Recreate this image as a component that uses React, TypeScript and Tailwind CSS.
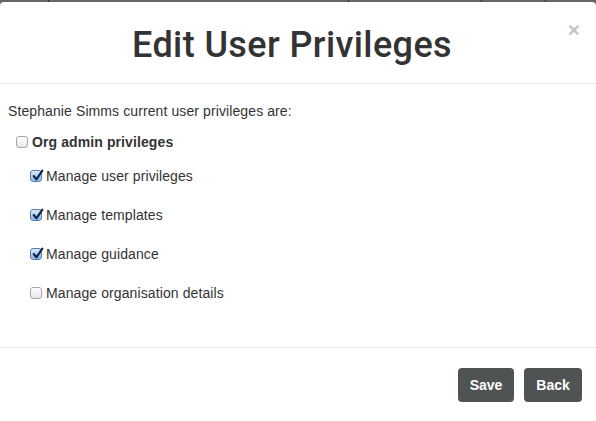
import React from "react"

const Box = ({ checked }: { checked: boolean }) => (
  <span
    className={
      "relative inline-block w-[12px] h-[12px] rounded-[3px] border shrink-0 " +
      (checked
        ? "border-[#5a7fb0] bg-gradient-to-b from-[#d9e8fb] to-[#8fb6ea]"
        : "border-[#a6a6a6] bg-gradient-to-b from-white to-[#e6e6e6]")
    }
  >
    {checked && (
      <svg viewBox="0 0 12 12" className="absolute left-[0px] top-[-2px] w-[13px] h-[13px]">
        <path d="M2.5 6.5 L5 9.5 L10.5 1.5" fill="none" stroke="#0f2748" strokeWidth="2" strokeLinecap="round" strokeLinejoin="round" />
      </svg>
    )}
  </span>
)

const privileges = [
  { label: "Manage user privileges", checked: true },
  { label: "Manage templates", checked: true },
  { label: "Manage guidance", checked: true },
  { label: "Manage organisation details", checked: false },
]

export default function App() {
  return (
    <div className="h-[421px] w-[596px] overflow-hidden bg-[#666] font-['Liberation_Sans',Arial,sans-serif] text-[#333]">
      <div className="flex h-[2px]">
        <div className="w-[49px] border-r border-[#333]" />
        <div className="w-[300px] border-r border-[#333]" />
        <div className="w-[133px] border-r border-[#333]" />
        <div className="w-[64px] border-r border-[#333]" />
      </div>
      <div className="h-[419px] bg-white rounded-t-[4px]">
        <div className="relative h-[82px] border-b border-[#e5e5e5] flex justify-center">
          <h1 className="mt-[21px] ml-[-12px] font-['Roboto',sans-serif] text-[36px] leading-[44px] font-medium tracking-[0.4px]">
            Edit User Privileges
          </h1>
          <span className="absolute right-[16px] top-[17px] text-[21px] font-bold leading-[21px] text-[#c4c4c4]">
            ×
          </span>
        </div>
        <div className="h-[264px] border-b border-[#e5e5e5] px-[8px] pt-[17px] text-[14px] leading-[20px] tracking-[0.1px]">
          <p>Stephanie Simms current user privileges are:</p>
          <div className="mt-[11px] flex items-center gap-[4px] pl-[8px]">
            <Box checked={false} />
            <span className="font-bold">Org admin privileges</span>
          </div>
          <div className="mt-[14px] flex flex-col gap-[19px] pl-[22px]">
            {privileges.map((p) => (
              <div key={p.label} className="flex items-center gap-[4px]">
                <Box checked={p.checked} />
                <span>{p.label}</span>
              </div>
            ))}
          </div>
        </div>
        <div className="flex justify-end gap-[10px] pr-[14px] pt-[20px]">
          <button className="h-[34px] w-[56px] rounded-[4px] bg-[#4f5354] text-[14px] font-bold text-white">
            Save
          </button>
          <button className="h-[34px] w-[58px] rounded-[4px] bg-[#4f5354] text-[14px] font-bold text-white">
            Back
          </button>
        </div>
      </div>
    </div>
  )
}
